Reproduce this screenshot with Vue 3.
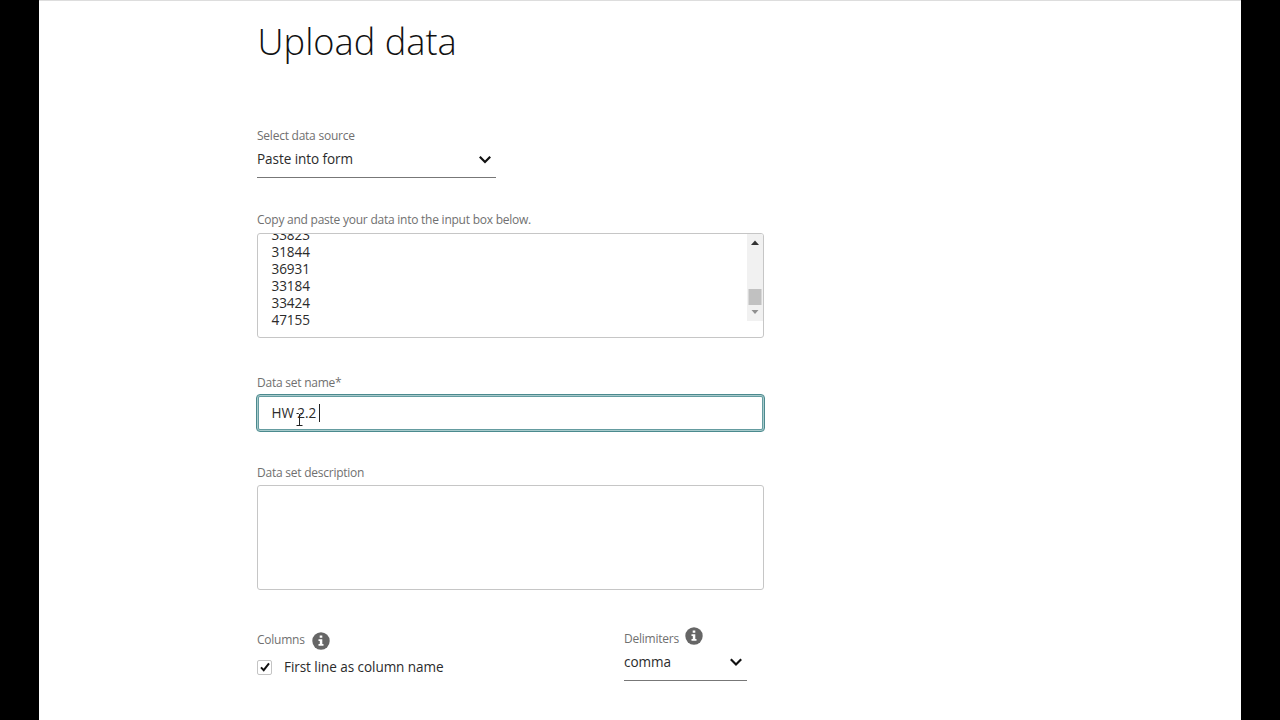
<script setup>
import { ref } from 'vue';

const rows = ['33823', '31844', '36931', '33184', '33424', '47155'];
const name = ref('HW 2.2');
const firstLineAsName = ref(true);
</script>
<template>
  <div class="stage">
    <main class="page">
      <h1 class="title">Upload data</h1>

      <section class="field source">
        <div class="label">Select data source</div>
        <div class="select">
          <span>Paste into form</span>
          <svg class="chevron" viewBox="0 0 14 10"><path d="M1.8 2.8 7 8l5.2-5.2" /></svg>
        </div>
      </section>

      <section class="field paste">
        <div class="label">Copy and paste your data into the input box below.</div>
        <div class="box data-box">
          <div class="rows">
            <div v-for="row in rows" :key="row" class="row">{{ row }}</div>
          </div>
          <div class="scrollbar">
            <svg viewBox="0 0 16 87">
              <path class="arrow-up" d="M4 11h8L8 6.5z" />
              <rect class="thumb" x="1.5" y="55" width="13" height="16" />
              <path class="arrow-down" d="M4.5 76h7L8 80z" />
            </svg>
          </div>
        </div>
      </section>

      <section class="field name">
        <div class="label">Data set name*</div>
        <div class="name-input">
          <span>{{ name }}</span>
          <i class="caret"></i>
          <svg class="pointer" viewBox="0 0 9 16">
            <path d="M1.5 1.5h2l1 1 1-1h2M4.5 2.5v11M1.5 13.5h6" />
          </svg>
        </div>
      </section>

      <section class="field description">
        <div class="label">Data set description</div>
        <div class="box"></div>
      </section>

      <div class="options">
        <section class="columns">
          <div class="label with-icon">
            <span>Columns</span>
            <svg class="info" viewBox="0 0 18 18">
              <circle cx="9" cy="9" r="8.7" />
              <path d="M7.7 3.4h2.6v2.4H7.7zM6.5 7.2h3.8v4.9h1.2v1.7h-5v-1.7h1.3V8.9H6.5z" />
            </svg>
          </div>
          <div class="check-row" @click="firstLineAsName = !firstLineAsName">
            <span class="checkbox">
              <svg v-if="firstLineAsName" viewBox="0 0 10 10"><path d="M1 5.4 3.7 8.2 9 1.4" /></svg>
            </span>
            <span>First line as column name</span>
          </div>
        </section>

        <section class="delimiters">
          <div class="label with-icon">
            <span>Delimiters</span>
            <svg class="info" viewBox="0 0 18 18">
              <circle cx="9" cy="9" r="8.7" />
              <path d="M7.7 3.4h2.6v2.4H7.7zM6.5 7.2h3.8v4.9h1.2v1.7h-5v-1.7h1.3V8.9H6.5z" />
            </svg>
          </div>
          <div class="select">
            <span>comma</span>
            <svg class="chevron" viewBox="0 0 14 10"><path d="M1.8 2.3 7 7.5l5.2-5.2" /></svg>
          </div>
        </section>
      </div>
    </main>
  </div>
</template>
<style>
body {
  margin: 0;
  background: #000;
  overflow: hidden;
}
</style>
<style scoped>
.stage {
  height: 720px;
  padding: 0 39px;
  box-sizing: border-box;
  overflow: hidden;
  background: #000;
  color: #2b2b2b;
  font-family: 'Open Sans', 'Noto Sans', sans-serif;
  font-size: 13.55px;
  letter-spacing: -0.07px;
  line-height: 20px;
}

.page {
  height: 720px;
  box-sizing: border-box;
  border-top: 1px solid #ddd;
  padding: 14px 0 0 218px;
  background: #fff;
}

.title {
  margin: 0 0 0 0.6px;
  height: 113px;
  color: #111;
  font-size: 36.2px;
  font-weight: 300;
  letter-spacing: 0;
  line-height: 52px;
}

.field {
  width: 507px;
}

.label {
  color: #707070;
  font-size: 12px;
  letter-spacing: -0.24px;
  line-height: 16px;
}

.select {
  display: flex;
  align-items: center;
  justify-content: space-between;
  height: 33px;
  box-sizing: border-box;
  padding: 0 4px 4px 0;
  border-bottom: 1px solid #777;
}

.chevron {
  width: 14px;
  height: 10px;
  fill: none;
  stroke: #111;
  stroke-width: 2.2;
}

.source {
  width: 239px;
  height: 84px;
}

.source .label {
  height: 17px;
}

.paste {
  height: 163px;
}

.paste .label {
  height: 21px;
}

.box {
  height: 105px;
  box-sizing: border-box;
  border: 1px solid #c6c6c6;
  border-radius: 3px;
}

.data-box {
  display: flex;
  justify-content: space-between;
  overflow: hidden;
  padding-left: 13.5px;
}

.rows {
  margin-top: -7.5px;
}

.row {
  height: 17.2px;
  line-height: 17.2px;
}

.scrollbar {
  width: 16px;
  height: 87px;
  background: #f1f1f1;
}

.scrollbar svg {
  display: block;
  width: 16px;
  height: 87px;
}

.thumb {
  fill: #c1c1c1;
}

.arrow-up {
  fill: #333;
}

.arrow-down {
  fill: #909090;
}

.name {
  height: 90px;
}

.name .label {
  height: 19px;
}

.name-input {
  position: relative;
  display: flex;
  align-items: center;
  width: 509px;
  height: 38px;
  margin-left: -1px;
  padding-left: 14.5px;
  box-sizing: border-box;
  border: 1px solid #4b8a8e;
  border-radius: 4px;
  box-shadow: inset 0 0 0 1px #a9cbcc, inset 0 0 0 2px #659ca0;
}

.caret {
  width: 1px;
  height: 18px;
  margin-left: 3px;
  background: #222;
}

/* text cursor hovering over the field */
.pointer {
  position: absolute;
  left: 38px;
  top: 17px;
  width: 9px;
  height: 16px;
  fill: none;
  stroke: #222;
  stroke-width: 1;
}

.description {
  height: 166px;
}

.description .label {
  height: 20px;
}

.options {
  display: flex;
}

.columns {
  width: 367px;
}

.with-icon {
  display: flex;
  align-items: center;
  gap: 7.7px;
}

.info {
  width: 18px;
  height: 18px;
  fill: #666;
}

.info path {
  fill: #fff;
}

.columns .with-icon {
  height: 18px;
}

.columns .info {
  position: relative;
  top: 1px;
}

.check-row {
  display: flex;
  align-items: center;
  gap: 12px;
  margin-top: 8px;
}

.checkbox {
  display: flex;
  align-items: center;
  justify-content: center;
  width: 15px;
  height: 15px;
  box-sizing: border-box;
  border: 1px solid #c4c4c4;
  border-radius: 2px;
}

.checkbox svg {
  width: 10px;
  height: 10px;
  fill: none;
  stroke: #111;
  stroke-width: 2;
}

.delimiters {
  width: 123.4px;
}

.delimiters .with-icon {
  height: 16px;
  margin-bottom: 1px;
  gap: 6px;
}

.delimiters .info {
  position: relative;
  top: -3px;
}
</style>
